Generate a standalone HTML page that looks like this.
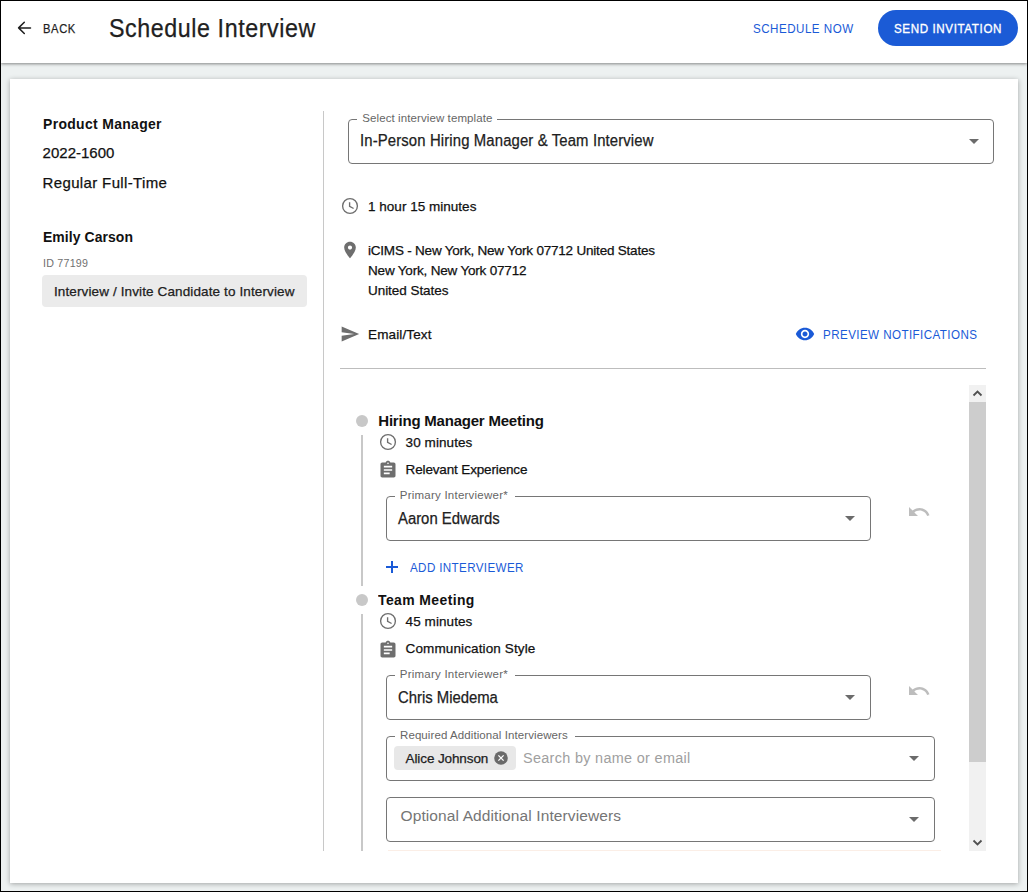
<!DOCTYPE html>
<html><head><meta charset="utf-8"><style>
html,body{margin:0;padding:0;width:1028px;height:892px;overflow:hidden;background:#edf1f1}
body{position:relative;font-family:"Liberation Sans",sans-serif}
.b{position:absolute;display:block}
.t{position:absolute;white-space:nowrap}
.d{-webkit-text-stroke:0.25px currentColor}
</style></head><body>
<div class="b" style="left:0px;top:0px;width:1028px;height:892px;background:#edf1f1;border:1px solid #000;box-sizing:border-box"></div>
<div class="b" style="left:10px;top:79px;width:1008px;height:804px;background:#fff;box-shadow:0 1px 5px rgba(0,0,0,.32)"></div>
<div class="b" style="left:1px;top:1px;width:1026px;height:62px;background:#fff;box-shadow:0 1px 3px rgba(0,0,0,.45)"></div>
<div class="b" style="left:878px;top:10px;width:140px;height:36px;background:#1b5bd6;border-radius:18px"></div>
<div class="b" style="left:323px;top:111px;width:1px;height:740px;background:#c8c8c8"></div>
<div class="b" style="left:42px;top:275px;width:265px;height:32px;background:#ebebeb;border-radius:4px"></div>
<div class="b" style="left:348px;top:119px;width:646px;height:45px;border:1px solid #767676;border-radius:4px;box-sizing:border-box"></div><div class="b" style="left:357px;top:118px;width:140px;height:3px;background:#fff"></div>
<div class="b" style="left:340px;top:368px;width:646px;height:1px;background:#bdbdbd"></div>
<div class="b" style="left:356px;top:415px;width:12px;height:12px;background:#c8c8c8;border-radius:50%"></div>
<div class="b" style="left:361px;top:435px;width:2px;height:151px;background:#c8c8c8"></div>
<div class="b" style="left:356px;top:594px;width:12px;height:12px;background:#c8c8c8;border-radius:50%"></div>
<div class="b" style="left:361px;top:614px;width:2px;height:237px;background:#c8c8c8"></div>
<div class="b" style="left:386px;top:496px;width:485px;height:45px;border:1px solid #767676;border-radius:4px;box-sizing:border-box"></div><div class="b" style="left:395px;top:495px;width:120px;height:3px;background:#fff"></div>
<div class="b" style="left:386px;top:675px;width:485px;height:45px;border:1px solid #767676;border-radius:4px;box-sizing:border-box"></div><div class="b" style="left:395px;top:674px;width:120px;height:3px;background:#fff"></div>
<div class="b" style="left:386px;top:736px;width:549px;height:45px;border:1px solid #767676;border-radius:4px;box-sizing:border-box"></div><div class="b" style="left:395px;top:735px;width:179.5px;height:3px;background:#fff"></div>
<div class="b" style="left:386px;top:797px;width:549px;height:45px;border:1px solid #767676;border-radius:4px;box-sizing:border-box"></div>
<div class="b" style="left:394px;top:746px;width:122px;height:24px;background:#e8e8e8;border-radius:4px"></div>
<div class="b" style="left:388px;top:850px;width:553px;height:1px;background:#fbeee6"></div>
<div class="b" style="left:969px;top:385px;width:17px;height:466px;background:#f1f1f1"></div>
<div class="b" style="left:969px;top:402px;width:17px;height:360px;background:#cdcdcd"></div>
<svg class="b" style="left:968.5px;top:139.0px" width="10" height="5" viewBox="0 0 10 5"><path d="M0 0h10L5 5z" fill="#6b6b6b"/></svg>
<svg class="b" style="left:845px;top:515.5px" width="10" height="5" viewBox="0 0 10 5"><path d="M0 0h10L5 5z" fill="#6b6b6b"/></svg>
<svg class="b" style="left:845px;top:695.0px" width="10" height="5" viewBox="0 0 10 5"><path d="M0 0h10L5 5z" fill="#6b6b6b"/></svg>
<svg class="b" style="left:909px;top:756.0px" width="10" height="5" viewBox="0 0 10 5"><path d="M0 0h10L5 5z" fill="#6b6b6b"/></svg>
<svg class="b" style="left:909px;top:817.0px" width="10" height="5" viewBox="0 0 10 5"><path d="M0 0h10L5 5z" fill="#6b6b6b"/></svg>
<svg class="b" style="left:0;top:0" width="40" height="60"><path d="M24.3 22.3L18.6 27.9L24.3 33.5M18.6 27.9H30.5" fill="none" stroke="#1e1e1e" stroke-width="1.5" stroke-linecap="round" stroke-linejoin="round"/></svg>
<svg class="b" style="left:340px;top:196px" width="20" height="20" viewBox="0 0 20 20"><circle cx="10" cy="10" r="7.4" fill="none" stroke="#6e6e6e" stroke-width="1.35"/><path d="M9.6 6.2V10.3L13.6 12.5" fill="none" stroke="#6e6e6e" stroke-width="1.35"/></svg>
<svg class="b" style="left:378px;top:432px" width="20" height="20" viewBox="0 0 20 20"><circle cx="10" cy="10" r="7.4" fill="none" stroke="#6e6e6e" stroke-width="1.35"/><path d="M9.6 6.2V10.3L13.6 12.5" fill="none" stroke="#6e6e6e" stroke-width="1.35"/></svg>
<svg class="b" style="left:378px;top:611px" width="20" height="20" viewBox="0 0 20 20"><circle cx="10" cy="10" r="7.4" fill="none" stroke="#6e6e6e" stroke-width="1.35"/><path d="M9.6 6.2V10.3L13.6 12.5" fill="none" stroke="#6e6e6e" stroke-width="1.35"/></svg>
<svg class="b" style="left:340px;top:240px" width="20" height="20" viewBox="0 0 24 24"><path fill="#6e6e6e" d="M12 2C8.13 2 5 5.13 5 9c0 5.25 7 13 7 13s7-7.75 7-13c0-3.87-3.13-7-7-7zm0 9.5c-1.38 0-2.5-1.12-2.5-2.5s1.12-2.5 2.5-2.5 2.5 1.12 2.5 2.5-1.12 2.5-2.5 2.5z"/></svg>
<svg class="b" style="left:340px;top:324px" width="20" height="20" viewBox="0 0 24 24"><path fill="#6e6e6e" d="M2.01 21L23 12 2.01 3 2 10l15 2-15 2z"/></svg>
<svg class="b" style="left:795px;top:324px" width="20" height="20" viewBox="0 0 24 24"><path fill="#1a5ad7" d="M12 4.5C7 4.5 2.73 7.61 1 12c1.73 4.39 6 7.5 11 7.5s9.27-3.11 11-7.5c-1.73-4.39-6-7.5-11-7.5zM12 17c-2.76 0-5-2.24-5-5s2.24-5 5-5 5 2.24 5 5-2.24 5-5 5zm0-8c-1.66 0-3 1.34-3 3s1.34 3 3 3 3-1.34 3-3-1.34-3-3-3z"/></svg>
<svg class="b" style="left:378px;top:460px" width="20" height="20" viewBox="0 0 24 24"><path fill="#6e6e6e" d="M19 3h-4.18C14.4 1.84 13.3 1 12 1c-1.3 0-2.4.84-2.82 2H5c-1.1 0-2 .9-2 2v14c0 1.1.9 2 2 2h14c1.1 0 2-.9 2-2V5c0-1.1-.9-2-2-2zm-7 0c.55 0 1 .45 1 1s-.45 1-1 1-1-.45-1-1 .45-1 1-1zm2 14H7v-2h7v2zm3-4H7v-2h10v2zm0-4H7V7h10v2z"/></svg>
<svg class="b" style="left:378px;top:640px" width="20" height="20" viewBox="0 0 24 24"><path fill="#6e6e6e" d="M19 3h-4.18C14.4 1.84 13.3 1 12 1c-1.3 0-2.4.84-2.82 2H5c-1.1 0-2 .9-2 2v14c0 1.1.9 2 2 2h14c1.1 0 2-.9 2-2V5c0-1.1-.9-2-2-2zm-7 0c.55 0 1 .45 1 1s-.45 1-1 1-1-.45-1-1 .45-1 1-1zm2 14H7v-2h7v2zm3-4H7v-2h10v2zm0-4H7V7h10v2z"/></svg>
<svg class="b" style="left:907px;top:500px" width="24" height="24" viewBox="0 0 24 24"><path fill="#bdbdbd" d="M12.5 8c-2.65 0-5.05.99-6.9 2.6L2 7v9h9l-3.62-3.62c1.39-1.16 3.16-1.88 5.12-1.88 3.54 0 6.55 2.31 7.6 5.5l2.37-.78C21.08 11.03 17.15 8 12.5 8z"/></svg>
<svg class="b" style="left:907px;top:679px" width="24" height="24" viewBox="0 0 24 24"><path fill="#bdbdbd" d="M12.5 8c-2.65 0-5.05.99-6.9 2.6L2 7v9h9l-3.62-3.62c1.39-1.16 3.16-1.88 5.12-1.88 3.54 0 6.55 2.31 7.6 5.5l2.37-.78C21.08 11.03 17.15 8 12.5 8z"/></svg>
<div class="b" style="left:386px;top:566px;width:12px;height:1.7px;background:#1a5ad7"></div>
<div class="b" style="left:391.15px;top:561px;width:1.7px;height:12px;background:#1a5ad7"></div>
<svg class="b" style="left:492.8px;top:749.8px" width="16" height="16" viewBox="0 0 16 16"><circle cx="8" cy="8" r="6.8" fill="#6a6a6a"/><path d="M5.4 5.4L10.6 10.6M10.6 5.4L5.4 10.6" stroke="#fff" stroke-width="1.3"/></svg>
<svg class="b" style="left:969px;top:385px" width="17" height="17" viewBox="0 0 17 17"><path d="M4.5 10.5L8.5 6.5L12.5 10.5" fill="none" stroke="#505050" stroke-width="1.8"/></svg>
<svg class="b" style="left:969px;top:834px" width="17" height="17" viewBox="0 0 17 17"><path d="M4.5 6.5L8.5 10.5L12.5 6.5" fill="none" stroke="#505050" stroke-width="1.8"/></svg>
<div class="t d" style="left:42.70px;top:20.50px;font-size:13px;line-height:16px;letter-spacing:0.720px;color:#1f1f1f;font-weight:400;transform:scaleX(0.8600);transform-origin:0 0;">BACK</div>
<div class="t d" style="left:108.50px;top:12.74px;font-size:25px;line-height:31px;letter-spacing:0.619px;color:#212121;font-weight:400;transform:scaleX(0.9300);transform-origin:0 0;">Schedule Interview</div>
<div class="t" style="left:753.40px;top:20.12px;font-size:13.5px;line-height:17px;letter-spacing:0.557px;color:#1a5ad7;font-weight:400;transform:scaleX(0.8600);transform-origin:0 0;">SCHEDULE NOW</div>
<div class="t" style="left:894.00px;top:20.12px;font-size:13.5px;line-height:17px;letter-spacing:0.706px;color:#ffffff;font-weight:400;transform:scaleX(0.8600);transform-origin:0 0;-webkit-text-stroke:0.35px #fff">SEND INVITATION</div>
<div class="t" style="left:42.60px;top:114.20px;font-size:15px;line-height:19px;letter-spacing:0.350px;color:#111111;font-weight:700;transform:scaleX(0.9300);transform-origin:0 0;">Product Manager</div>
<div class="t d" style="left:42.60px;top:142.90px;font-size:15px;line-height:19px;letter-spacing:0.009px;color:#111111;font-weight:400;">2022-1600</div>
<div class="t d" style="left:42.60px;top:173.30px;font-size:15px;line-height:19px;letter-spacing:0.354px;color:#111111;font-weight:400;">Regular Full-Time</div>
<div class="t" style="left:42.60px;top:227.20px;font-size:15px;line-height:19px;letter-spacing:0.073px;color:#111111;font-weight:700;transform:scaleX(0.9300);transform-origin:0 0;">Emily Carson</div>
<div class="t" style="left:42.60px;top:256.42px;font-size:11.5px;line-height:14px;letter-spacing:0.229px;color:#707070;font-weight:400;transform:scaleX(0.9300);transform-origin:0 0;">ID 77199</div>
<div class="t d" style="left:54.00px;top:282.52px;font-size:13.5px;line-height:17px;letter-spacing:0.119px;color:#212121;font-weight:400;">Interview / Invite Candidate to Interview</div>
<div class="t d" style="left:360.00px;top:130.66px;font-size:16px;line-height:20px;letter-spacing:0.137px;color:#212121;font-weight:400;transform:scaleX(0.9300);transform-origin:0 0;">In-Person Hiring Manager &amp; Team Interview</div>
<div class="t" style="left:362.30px;top:111.02px;font-size:11.5px;line-height:14px;letter-spacing:0.094px;color:#666666;font-weight:400;">Select interview template</div>
<div class="t d" style="left:368.00px;top:197.72px;font-size:13.5px;line-height:17px;letter-spacing:0.021px;color:#111111;font-weight:400;">1 hour 15 minutes</div>
<div class="t d" style="left:368.00px;top:241.72px;font-size:13.5px;line-height:17px;letter-spacing:-0.209px;color:#111111;font-weight:400;">iCIMS - New York, New York 07712 United States</div>
<div class="t d" style="left:368.00px;top:261.82px;font-size:13.5px;line-height:17px;letter-spacing:-0.190px;color:#111111;font-weight:400;">New York, New York 07712</div>
<div class="t d" style="left:368.00px;top:281.62px;font-size:13.5px;line-height:17px;letter-spacing:-0.045px;color:#111111;font-weight:400;">United States</div>
<div class="t d" style="left:368.00px;top:325.82px;font-size:13.5px;line-height:17px;letter-spacing:0.138px;color:#111111;font-weight:400;">Email/Text</div>
<div class="t" style="left:823.20px;top:326.12px;font-size:13.5px;line-height:17px;letter-spacing:0.490px;color:#1a5ad7;font-weight:400;transform:scaleX(0.8600);transform-origin:0 0;">PREVIEW NOTIFICATIONS</div>
<div class="t" style="left:378.30px;top:411.10px;font-size:15px;line-height:19px;letter-spacing:-0.215px;color:#111111;font-weight:700;">Hiring Manager Meeting</div>
<div class="t d" style="left:405.60px;top:433.82px;font-size:13.5px;line-height:17px;letter-spacing:0.073px;color:#111111;font-weight:400;">30 minutes</div>
<div class="t d" style="left:405.60px;top:460.82px;font-size:13.5px;line-height:17px;letter-spacing:-0.149px;color:#111111;font-weight:400;">Relevant Experience</div>
<div class="t" style="left:399.80px;top:488.02px;font-size:11.5px;line-height:14px;letter-spacing:0.230px;color:#666666;font-weight:400;">Primary Interviewer*</div>
<div class="t d" style="left:398.00px;top:508.86px;font-size:16px;line-height:20px;letter-spacing:-0.012px;color:#212121;font-weight:400;transform:scaleX(0.9300);transform-origin:0 0;">Aaron Edwards</div>
<div class="t" style="left:410.00px;top:559.22px;font-size:13.5px;line-height:17px;letter-spacing:0.435px;color:#1a5ad7;font-weight:400;transform:scaleX(0.8600);transform-origin:0 0;">ADD INTERVIEWER</div>
<div class="t" style="left:378.30px;top:590.00px;font-size:15px;line-height:19px;letter-spacing:0.431px;color:#111111;font-weight:700;transform:scaleX(0.9300);transform-origin:0 0;">Team Meeting</div>
<div class="t d" style="left:405.60px;top:612.92px;font-size:13.5px;line-height:17px;letter-spacing:0.073px;color:#111111;font-weight:400;">45 minutes</div>
<div class="t d" style="left:405.60px;top:640.42px;font-size:13.5px;line-height:17px;letter-spacing:0.120px;color:#111111;font-weight:400;">Communication Style</div>
<div class="t" style="left:399.80px;top:666.92px;font-size:11.5px;line-height:14px;letter-spacing:0.230px;color:#666666;font-weight:400;">Primary Interviewer*</div>
<div class="t d" style="left:398.00px;top:687.76px;font-size:16px;line-height:20px;letter-spacing:-0.015px;color:#212121;font-weight:400;transform:scaleX(0.9300);transform-origin:0 0;">Chris Miedema</div>
<div class="t" style="left:400.00px;top:727.52px;font-size:11.5px;line-height:14px;letter-spacing:0.090px;color:#666666;font-weight:400;">Required Additional Interviewers</div>
<div class="t d" style="left:405.60px;top:749.62px;font-size:13.5px;line-height:17px;letter-spacing:-0.113px;color:#212121;font-weight:400;">Alice Johnson</div>
<div class="t" style="left:522.90px;top:748.43px;font-size:15.5px;line-height:19px;letter-spacing:0.345px;color:#a0a0a0;font-weight:400;transform:scaleX(0.9300);transform-origin:0 0;">Search by name or email</div>
<div class="t" style="left:400.50px;top:806.33px;font-size:15.5px;line-height:19px;letter-spacing:0.109px;color:#757575;font-weight:400;">Optional Additional Interviewers</div>
</body></html>
